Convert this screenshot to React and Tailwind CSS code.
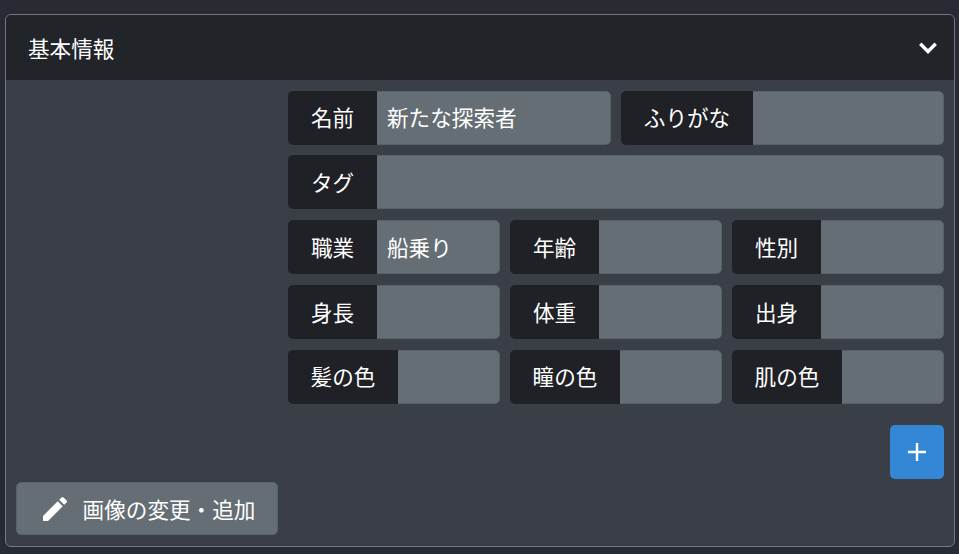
const F = ({ label, value, lw = "w-[89px]", className = "" }) => (
  <div className={`flex h-[54px] rounded-[5px] overflow-hidden ${className}`}>
    <div className={`${lw} shrink-0 bg-[#1f2126] text-white flex items-center justify-center text-[21.6px]`}>{label}</div>
    <div className="flex-1 min-w-0 bg-[#646e74] text-white flex items-center pl-[10px] text-[21.6px] border border-l-0 border-[#596067] rounded-r-[5px]">{value}</div>
  </div>
);

export default function App() {
  return (
    <div className="h-[554px] w-[959px] bg-[#282b33] pl-[5px] pr-[4px] pt-[14px] overflow-hidden" style={{ fontFamily: '"Noto Sans CJK JP", "Liberation Sans", sans-serif' }}>
      <div className="h-[533px] rounded-md border border-[#74787c] bg-[#3a3e46] flex flex-col overflow-hidden">
        <div className="h-[65px] shrink-0 bg-[#212428] flex items-center justify-between pl-[22px] pr-[16px] pt-[2px] text-white text-[21.6px]">
          <span>基本情報</span>
          <svg className="mb-[2px]" width="20" height="20" viewBox="0 0 20 20" fill="none" stroke="white" strokeWidth="3.4" strokeLinecap="square"><path d="M3.5 7 10 13.5 16.5 7" /></svg>
        </div>
        <div className="flex-1 flex px-[10px] pt-[10.7px] pb-[11px] gap-[10px]">
          <div className="w-[262px] shrink-0 flex flex-col justify-end">
            <button className="h-[53px] rounded-[5px] bg-[#646e74] border border-[#596067] text-white text-[21.6px] pt-[1px] flex items-center justify-center gap-[12px]">
              <svg width="32" height="32" viewBox="0 0 24 24" fill="white"><path d="M3 17.25V21h3.75L17.81 9.94l-3.75-3.75L3 17.25zM20.71 7.04a1 1 0 0 0 0-1.41l-2.34-2.34a1 1 0 0 0-1.41 0l-1.83 1.83 3.75 3.75 1.83-1.83z" /></svg>
              画像の変更・追加
            </button>
          </div>
          <div className="flex-1 flex flex-col gap-[10.75px]">
            <div className="flex gap-[10px]">
              <F label="名前" value="新たな探索者" className="w-[323px]" />
              <F label="ふりがな" lw="w-[132px]" className="flex-1" />
            </div>
            <F label="タグ" />
            {[
              [["職業", "船乗り"], ["年齢"], ["性別"]],
              [["身長"], ["体重"], ["出身"]],
              [["髪の色"], ["瞳の色"], ["肌の色"]],
            ].map((row, i) => (
              <div key={i} className="grid grid-cols-3 gap-[10px]">
                {row.map(([l, v]) => <F key={l} label={l} value={v} lw={i === 2 ? "w-[110px]" : "w-[89px]"} />)}
              </div>
            ))}
            <div className="flex justify-end mt-[10.6px]">
              <button className="w-[54px] h-[54px] rounded-[5px] bg-[#3387d5] text-white flex items-center justify-center">
                <svg width="20" height="20" viewBox="0 0 20 20" stroke="white" strokeWidth="2.4"><path d="M10 1v18M1 10h18" /></svg>
              </button>
            </div>
          </div>
        </div>
      </div>
    </div>
  );
}
